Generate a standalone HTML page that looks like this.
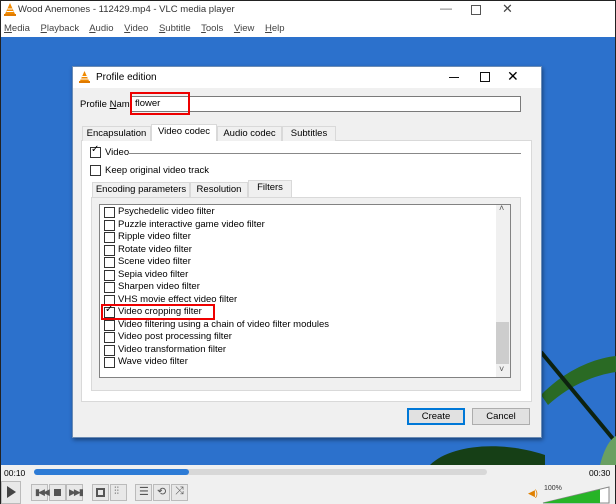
<!DOCTYPE html>
<html><head><style>
*{box-sizing:border-box;margin:0;padding:0}
body{width:616px;height:504px;overflow:hidden;font-family:"Liberation Sans",sans-serif;font-size:9.5px;color:#000;background:#fff;position:relative}
.a{position:absolute}
.cb{position:absolute;width:11px;height:11px;border:1px solid #333;background:#fff}
.row{position:absolute;left:104px;height:12px;line-height:12px;white-space:nowrap}
.row .cb{left:0;top:1px}
.row span{position:absolute;left:14px;top:0}
.tab{position:absolute;height:15px;line-height:14px;text-align:center;border:1px solid #d9d9d9;border-bottom:none;background:#f0f0f0}
.tab.s{background:#fff;height:17px;border-color:#d9d9d9;z-index:2}
.btn{position:absolute;border:1px solid #adadad;background:#e1e1e1;text-align:center;line-height:15px;height:17px}
.cbt{position:absolute;top:484px;width:17px;height:17px;border:1px solid #bbb;background:#e8e8e8}
</style></head><body>
<div class="a" style="left:0;top:0;width:616px;height:504px;border:1px solid #222;border-bottom:none"></div>
<svg class="a" style="left:4px;top:3px" width="12" height="13"><path d="M6 0 L11 11 L1 11Z" fill="#f08a00"/><rect x="0" y="11" width="12" height="2" fill="#e07a00"/><path d="M3.5 6 h5 M2.5 8.5 h7" stroke="#fff" stroke-width="1"/></svg>
<div class="a" style="left:18px;top:4px;color:#333">Wood Anemones - 112429.mp4 - VLC media player</div>
<div class="a" style="left:440px;top:1px;color:#666;font-size:12px">—</div>
<div class="a" style="left:471px;top:5px;width:10px;height:10px;border:1px solid #555"></div>
<div class="a" style="left:502px;top:1px;color:#444;font-size:13px">✕</div>
<div class="a" style="left:4px;top:23px;color:#444;word-spacing:8px"><u>M</u>edia <u>P</u>layback <u>A</u>udio <u>V</u>ideo <u>S</u>ubtitle <u>T</u>ools <u>V</u>iew <u>H</u>elp</div>
<div class="a" style="left:1px;top:37px;width:614px;height:428px;background:#2c71cc"></div>
<svg class="a" style="left:0;top:0" width="616" height="465">
<path d="M541 395 C565 370 595 358 616 356 L616 372 C595 375 570 385 548 405Z" fill="#2a6a24"/>
<path d="M541 352 L614 440" stroke="#0d2210" stroke-width="4"/>
<path d="M430 465 C450 445 500 440 545 455 L545 465Z" fill="#163f16"/>
<path d="M600 465 C605 445 612 438 616 436 L616 465Z" fill="#6aa062"/>
</svg>
<div class="a" style="left:72px;top:66px;width:470px;height:372px;background:#f0f0f0;border:1px solid #6b8cb5;box-shadow:1px 2px 4px rgba(0,0,0,.4)"></div>
<div class="a" style="left:73px;top:67px;width:468px;height:21px;background:#fff"></div>
<svg class="a" style="left:79px;top:71px" width="11" height="12"><path d="M5.5 0 L10 10 L1 10Z" fill="#f08a00"/><rect x="0" y="10" width="11" height="2" fill="#e07a00"/><path d="M3 5.5 h5 M2 8 h7" stroke="#fff"/></svg>
<div class="a" style="left:96px;top:72px;font-size:10px">Profile edition</div>
<div class="a" style="left:449px;top:77px;width:10px;height:1px;background:#111"></div>
<div class="a" style="left:480px;top:72px;width:10px;height:10px;border:1px solid #111"></div>
<div class="a" style="left:507px;top:68px;font-size:14px">✕</div>
<div class="a" style="left:80px;top:99px">Profile <u>N</u>ame</div>
<div class="a" style="left:131px;top:96px;width:390px;height:16px;background:#fff;border:1px solid #7a7a7a;padding-left:3px;line-height:14px">flower</div>
<div class="a" style="left:130px;top:92px;width:60px;height:23px;border:2px solid #e00"></div>
<div class="a" style="left:81px;top:140px;width:451px;height:262px;background:#fff;border:1px solid #d9d9d9"></div>
<div class="tab" style="left:82px;top:126px;width:69px">Encapsulation</div>
<div class="tab s" style="left:151px;top:124px;width:66px">Video codec</div>
<div class="tab" style="left:217px;top:126px;width:65px">Audio codec</div>
<div class="tab" style="left:282px;top:126px;width:54px">Subtitles</div>
<div class="cb" style="left:90px;top:147px"></div><div class="a" style="left:91px;top:144px;font-size:10px">✓</div>
<div class="a" style="left:105px;top:147px">Video</div>
<div class="a" style="left:128px;top:153px;width:393px;height:1px;background:#888"></div>
<div class="cb" style="left:90px;top:165px"></div>
<div class="a" style="left:105px;top:165px">Keep original video track</div>
<div class="a" style="left:91px;top:197px;width:430px;height:194px;background:#f0f0f0;border:1px solid #d9d9d9"></div>
<div class="tab" style="left:92px;top:182px;width:98px">Encoding parameters</div>
<div class="tab" style="left:190px;top:182px;width:58px">Resolution</div>
<div class="tab s" style="left:248px;top:180px;width:44px;background:#f0f0f0">Filters</div>
<div class="a" style="left:99px;top:204px;width:412px;height:174px;background:#fff;border:1px solid #828282"></div>
<div class="a" style="left:496px;top:205px;width:14px;height:172px;background:#f0f0f0"></div>
<div class="a" style="left:496px;top:322px;width:13px;height:42px;background:#cdcdcd"></div>
<div class="a" style="left:499px;top:203px;font-size:9px;color:#555">˄</div>
<div class="a" style="left:499px;top:364px;font-size:9px;color:#555">˅</div>
<div class="row" style="top:206px"><div class="cb"></div><span>Psychedelic video filter</span></div>
<div class="row" style="top:218.5px"><div class="cb"></div><span>Puzzle interactive game video filter</span></div>
<div class="row" style="top:231px"><div class="cb"></div><span>Ripple video filter</span></div>
<div class="row" style="top:243.5px"><div class="cb"></div><span>Rotate video filter</span></div>
<div class="row" style="top:256px"><div class="cb"></div><span>Scene video filter</span></div>
<div class="row" style="top:268.5px"><div class="cb"></div><span>Sepia video filter</span></div>
<div class="row" style="top:281px"><div class="cb"></div><span>Sharpen video filter</span></div>
<div class="row" style="top:293.5px"><div class="cb"></div><span>VHS movie effect video filter</span></div>
<div class="row" style="top:306px"><div class="cb"></div><span>Video cropping filter</span><div class="a" style="left:1px;top:-2px;font-size:10px">✓</div></div>
<div class="row" style="top:318.5px"><div class="cb"></div><span>Video filtering using a chain of video filter modules</span></div>
<div class="row" style="top:331px"><div class="cb"></div><span>Video post processing filter</span></div>
<div class="row" style="top:343.5px"><div class="cb"></div><span>Video transformation filter</span></div>
<div class="row" style="top:356px"><div class="cb"></div><span>Wave video filter</span></div>
<div class="a" style="left:101px;top:304px;width:114px;height:16px;border:2px solid #e00"></div>
<div class="btn" style="left:407px;top:408px;width:58px;border:1px solid #0078d7;box-shadow:inset 0 0 0 1px #0078d7">Create</div>
<div class="btn" style="left:472px;top:408px;width:58px">Cancel</div>
<div class="a" style="left:1px;top:465px;width:614px;height:39px;background:#f0f0f0"></div>
<div class="a" style="left:4px;top:468px;font-size:8.5px">00:10</div>
<div class="a" style="left:589px;top:468px;font-size:8.5px">00:30</div>
<div class="a" style="left:34px;top:469px;width:453px;height:6px;background:#d8d8d8;border-radius:3px"></div>
<div class="a" style="left:34px;top:469px;width:155px;height:6px;background:#2d7bd6;border-radius:3px"></div>
<div class="a" style="left:1px;top:481px;width:20px;height:23px;border:1px solid #bbb;background:#e8e8e8"></div>
<div class="a" style="left:7px;top:486px;border-left:9px solid #444;border-top:6px solid transparent;border-bottom:6px solid transparent"></div>
<div class="cbt" style="left:31px"></div><div class="cbt" style="left:49px"></div><div class="cbt" style="left:66px"></div>
<div class="cbt" style="left:92px"></div><div class="cbt" style="left:110px"></div>
<div class="cbt" style="left:135px"></div><div class="cbt" style="left:153px"></div><div class="cbt" style="left:171px"></div>
<div class="a" style="left:35px;top:487px;font-size:9px;color:#555;letter-spacing:-2px">▮◀◀</div>
<div class="a" style="left:54px;top:489px;width:7px;height:7px;background:#555"></div>
<div class="a" style="left:69px;top:487px;font-size:9px;color:#555;letter-spacing:-2px">▶▶▮</div>
<div class="a" style="left:96px;top:488px;width:9px;height:9px;border:2px dashed #555"></div>
<div class="a" style="left:114px;top:486px;font-size:10px;color:#555">⫶⫶</div>
<div class="a" style="left:139px;top:485px;font-size:11px;color:#555">☰</div>
<div class="a" style="left:157px;top:485px;font-size:11px;color:#555">⟲</div>
<div class="a" style="left:175px;top:485px;font-size:11px;color:#555">⤨</div>
<div class="a" style="left:528px;top:488px;font-size:9px;color:#e08000">◀)</div>
<div class="a" style="left:544px;top:485px;font-size:7px;color:#333">100%</div>
<svg class="a" style="left:542px;top:486px" width="68" height="18"><path d="M1 17 L67 17 L67 1Z" fill="#fff" stroke="#888"/><path d="M1 17 L58 17 L58 3.5Z" fill="#27b427"/></svg>
</body></html>
